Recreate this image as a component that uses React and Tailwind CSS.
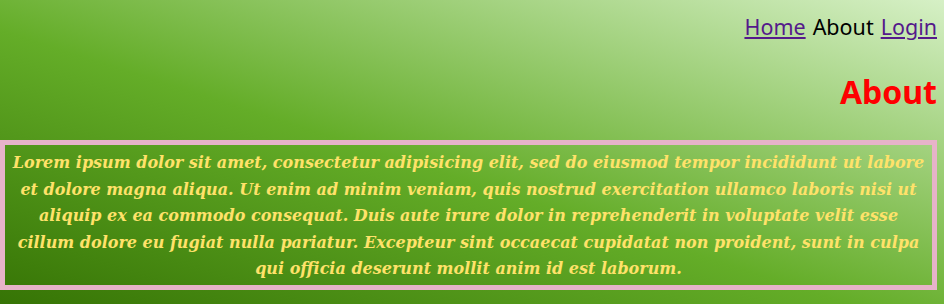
export default function App() {
  return (
    <div className="w-[944px] h-[304px] overflow-hidden bg-[linear-gradient(to_top_right,#367405_0%,#64ad28_45%,#d6f0c6_100%)] pr-[7px]">
      <nav className="flex justify-end gap-[7px] pt-[13px] text-[21.5px] leading-[28px] font-['Noto_Sans',sans-serif]">
        <a href="#" className="underline text-[#551a8b]">Home</a>
        <span className="text-black">About</span>
        <a href="#" className="underline text-[#551a8b]">Login</a>
      </nav>
      <h1 className="mt-[32px] text-right text-[32px] leading-[38px] font-bold text-[#ff0000] font-['Noto_Sans',sans-serif]">
        About
      </h1>
      <p className="mt-[29px] border-[5px] border-[#e6b3c9] pt-[5px] pb-[2px] text-center text-[16px] leading-[26.5px] font-bold italic text-[#ffe26a] font-['DejaVu_Serif',serif] whitespace-nowrap">
        Lorem ipsum dolor sit amet, consectetur adipisicing elit, sed do eiusmod tempor incididunt ut labore
        <br />
        et dolore magna aliqua. Ut enim ad minim veniam, quis nostrud exercitation ullamco laboris nisi ut
        <br />
        aliquip ex ea commodo consequat. Duis aute irure dolor in reprehenderit in voluptate velit esse
        <br />
        cillum dolore eu fugiat nulla pariatur. Excepteur sint occaecat cupidatat non proident, sunt in culpa
        <br />
        qui officia deserunt mollit anim id est laborum.
      </p>
    </div>
  );
}
